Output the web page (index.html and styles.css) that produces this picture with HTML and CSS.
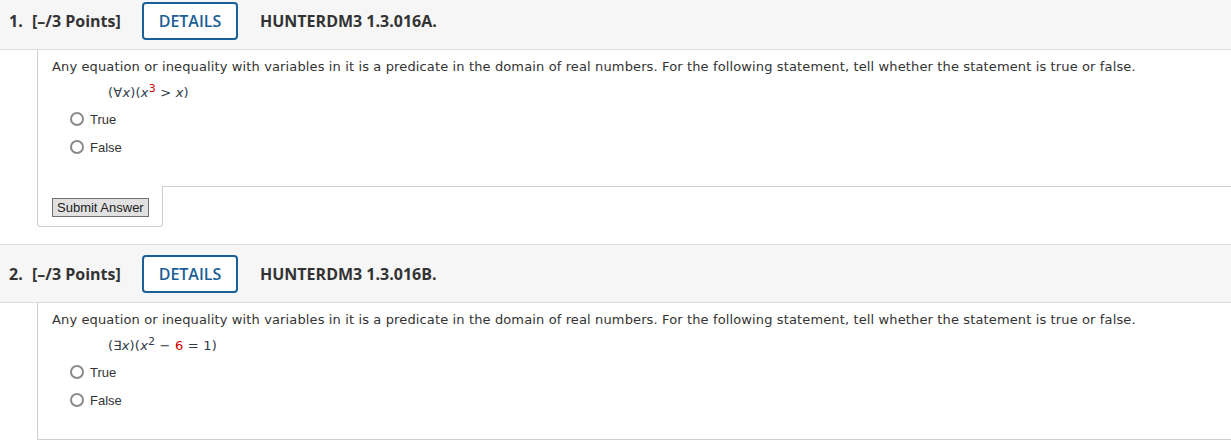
FILE: index.html
```html
<!DOCTYPE html>
<html lang="en">
<head>
    <meta charset="UTF-8">
    <title>Assignment</title>
    <link rel="stylesheet" href="styles.css">
</head>
<body>
<div class="assignment">

    <div class="question">
        <div class="q-header">
            <span class="q-num">1.</span>
            <span class="q-points">[&ndash;/3 Points]</span>
            <button class="details-btn">DETAILS</button>
            <span class="q-code">HUNTERDM3 1.3.016A.</span>
        </div>
        <div class="q-body">
            <p class="prompt">Any equation or inequality with variables in it is a predicate in the domain of real numbers. For the following statement, tell whether the statement is true or false.</p>
            <div class="math">(&forall;<i>x</i>)(<i>x</i><sup class="red">3</sup> &gt; <i>x</i>)</div>
            <label class="choice"><input type="radio" name="q1"> True</label>
            <label class="choice"><input type="radio" name="q1"> False</label>
        </div>
        <div class="q-footer">
            <div class="submit-tab"><button class="submit-btn">Submit Answer</button></div>
            <div class="footer-rest"></div>
        </div>
    </div>

    <div class="question">
        <div class="q-header">
            <span class="q-num">2.</span>
            <span class="q-points">[&ndash;/3 Points]</span>
            <button class="details-btn">DETAILS</button>
            <span class="q-code">HUNTERDM3 1.3.016B.</span>
        </div>
        <div class="q-body q-body-last">
            <p class="prompt">Any equation or inequality with variables in it is a predicate in the domain of real numbers. For the following statement, tell whether the statement is true or false.</p>
            <div class="math">(&exist;<i>x</i>)(<i>x</i><sup>2</sup> &minus; <span class="red">6</span> = 1)</div>
            <label class="choice"><input type="radio" name="q2"> True</label>
            <label class="choice"><input type="radio" name="q2"> False</label>
        </div>
    </div>

</div>
</body>
</html>
```

FILE: styles.css
```css
body {
    margin: 0;
    padding: 0;
    background-color: #fff;
    color: #333;
    font-family: 'DejaVu Sans', Verdana, sans-serif;
    overflow: hidden;
}

.assignment {
    margin-top: -9px;
}

.question {
    margin-bottom: 17px;
}

.q-header {
    display: flex;
    align-items: center;
    background-color: #f6f6f6;
    border-top: 1px solid #e0e0e0;
    border-bottom: 1px solid #dcdcdc;
    padding: 10px 0 9px 9px;
    font-family: 'Open Sans', sans-serif;
    font-weight: 700;
    font-size: 16px;
    color: #333;
}

.q-num {
    width: 23px;
}

.q-points {
    width: 110px;
}

.details-btn {
    height: 38px;
    width: 96px;
    background-color: #fff;
    border: 2px solid #1a6096;
    border-radius: 4px;
    color: #1a6096;
    font-family: 'Open Sans', sans-serif;
    font-weight: 600;
    font-size: 16px;
    padding: 0;
    margin-right: 22px;
}

.q-body {
    margin-left: 37px;
    border-left: 1px solid #cfcfcf;
    padding: 8px 14px 20px 14px;
    font-size: 13px;
}

.q-body-last {
    border-bottom: 1px solid #cfcfcf;
}

.prompt {
    margin: 0;
    height: 18px;
    line-height: 18px;
    letter-spacing: 0.13px;
}

.math {
    height: 18px;
    margin: 8px 0 8px 56px;
    line-height: 18px;
    color: #2f3a48;
    letter-spacing: 0.2px;
}

.math sup {
    font-size: 11px;
    line-height: 0;
}

.red {
    color: #d40000;
}

.choice {
    display: flex;
    align-items: center;
    height: 18px;
    margin: 0 0 10px 18px;
    font-family: 'Liberation Sans', Arial, sans-serif;
    font-size: 13px;
    color: #333;
}

.choice input {
    appearance: none;
    width: 14px;
    height: 14px;
    margin: 0 6px 0 0;
    border: 2px solid #8a8a8a;
    border-radius: 50%;
    box-sizing: border-box;
    background-color: #fff;
}

.q-footer {
    display: flex;
    margin-left: 37px;
}

.submit-tab {
    border: 1px solid #cfcfcf;
    border-top: none;
    border-radius: 0 0 4px 4px;
    padding: 12px 13px 9px 14px;
}

.submit-btn {
    display: block;
    height: 19px;
    padding: 0 4px;
    background-color: #e1e1e1;
    border: 1px solid #707070;
    border-radius: 0;
    font-family: 'Liberation Sans', Arial, sans-serif;
    font-size: 13px;
    color: #222;
}

.footer-rest {
    flex: 1;
    border-top: 1px solid #cfcfcf;
}
```
